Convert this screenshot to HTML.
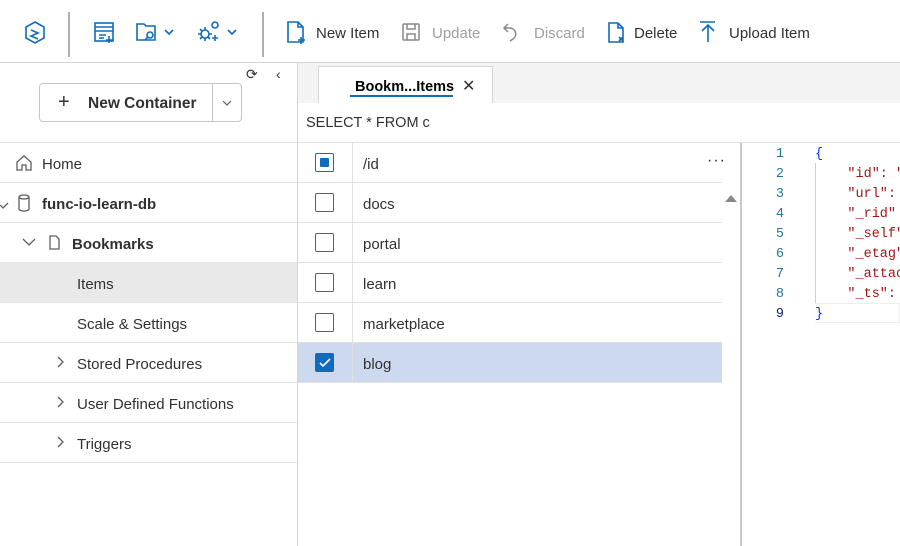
<!DOCTYPE html>
<html><head><style>
*{box-sizing:border-box;margin:0;padding:0}
body{width:900px;height:546px;overflow:hidden;background:#fff;font-family:"Liberation Sans",sans-serif;font-size:15px;color:#323130;position:relative}
.a{position:absolute}
.hl{position:absolute;height:1px;background:#e1e1e1}
.t{position:absolute;white-space:nowrap}
.cb{position:absolute;left:315px;width:19px;height:19px;border:1px solid #605e5c;border-radius:2px;background:#fff}
.mono{font-family:"Liberation Mono",monospace;font-size:13.5px}
</style></head><body>
<svg class="a" style="left:0;top:0" width="900" height="62">
<g fill="none" stroke="#0f6cbd" stroke-width="1.6">
<path d="M35 22 L44 27 L44 38 L35 43 L26 38 L26 27Z"/><path d="M31 30 L38 33 L31 36 L38 39"/>
<rect x="95" y="23" width="18" height="18"/><path d="M95 27h18M95 31h18M99 35h7M99 38h5M109 36v7M106 40h7"/>
<path d="M137 24h7l2 2h9v14h-18z"/><circle cx="150" cy="35" r="3"/><path d="M148 37l-3 3M165 30l4 4 4-4"/>
<circle cx="205" cy="34" r="4"/><path d="M205 27v3M205 38v3M198 34h3M209 34h3M200 29l2 2M208 37l2 2M200 39l2-2"/><circle cx="215" cy="25" r="3"/><path d="M215 35v6M212 38h6M228 30l4 4 4-4"/>
<path d="M288 22h10l5 5v15h-15z"/><path d="M298 22v5h5M301 37v7M298 40h7"/>
<path d="M609 23h9l5 5v14h-14z M618 23v5h5"/><path d="M619 37l4 4M623 37l-4 4"/>
<path d="M700 22h15M708 25v17M702 31l6-6 6 6"/>
</g>
<g fill="none" stroke="#8a8886" stroke-width="1.5">
<rect x="403" y="24" width="16" height="16" rx="1"/><path d="M407 24v5h8v-5M407 40v-6h8v6"/>
<path d="M508 24l-4 4 4 4M504 28h6a6 6 0 0 1 3 11l-3 2"/>
</g>
<path d="M69 12v45M263 12v45" stroke="#605e5c" stroke-width="1"/>
<text x="316" y="38" font-family="Liberation Sans" font-size="15" fill="#323130">New Item</text>
<text x="432" y="38" font-family="Liberation Sans" font-size="15" fill="#a19f9d">Update</text>
<text x="534" y="38" font-family="Liberation Sans" font-size="15" fill="#a19f9d">Discard</text>
<text x="634" y="38" font-family="Liberation Sans" font-size="15" fill="#323130">Delete</text>
<text x="729" y="38" font-family="Liberation Sans" font-size="15" fill="#323130">Upload Item</text>
</svg>
<div class="hl" style="left:0;top:62px;width:900px;background:#d6d6d6"></div>
<div class="a" style="left:297px;top:62px;width:1px;height:484px;background:#d6d6d6"></div>
<div class="t" style="left:246px;top:66px;font-size:14px">⟳</div>
<div class="t" style="left:276px;top:66px;font-size:14px">‹</div>
<div class="a" style="left:39px;top:83px;width:203px;height:39px;border:1px solid #c8c6c4;border-radius:4px"></div>
<div class="a" style="left:212px;top:84px;width:1px;height:37px;background:#c8c6c4"></div>
<div class="t" style="left:58px;top:91px;font-size:20px;font-weight:300">+</div>
<div class="t" style="left:88px;top:95px;font-size:15.5px;font-weight:bold;color:#323130">New Container</div>
<svg class="a" style="left:220px;top:98px" width="14" height="10"><path d="M3 3l4 4 4-4" fill="none" stroke="#605e5c" stroke-width="1.2"/></svg>
<div class="hl" style="left:0;top:142px;width:297px"></div>
<div class="a" style="left:0;top:262px;width:297px;height:40px;background:#e9e9e9"></div>
<div class="hl" style="left:0;top:182px;width:297px"></div><div class="hl" style="left:0;top:222px;width:297px"></div><div class="hl" style="left:0;top:262px;width:297px"></div><div class="hl" style="left:0;top:302px;width:297px"></div><div class="hl" style="left:0;top:342px;width:297px"></div><div class="hl" style="left:0;top:382px;width:297px"></div><div class="hl" style="left:0;top:422px;width:297px"></div><div class="hl" style="left:0;top:462px;width:297px"></div>
<svg class="a" style="left:0;top:142px" width="297" height="320" fill="none" stroke="#605e5c" stroke-width="1.3">
<path d="M17 28v-8l7-6 7 6v8h-5v-5h-4v5z"/>
<path d="M0 63l3 3 5-5"/><ellipse cx="24" cy="55" rx="5" ry="2"/><path d="M19 55v12a5 2 0 0 0 10 0v-12"/>
<path d="M23 97l6 6 6-6"/><path d="M50 94h6l3 3v10h-9z"/>
<path d="M58 215l5 5-5 5M58 255l5 5-5 5M58 295l5 5-5 5"/>
</svg>
<div class="t" style="left:42px;top:156px">Home</div>
<div class="t" style="left:42px;top:196px;font-weight:bold">func-io-learn-db</div>
<div class="t" style="left:72px;top:236px;font-weight:bold">Bookmarks</div>
<div class="t" style="left:77px;top:276px">Items</div>
<div class="t" style="left:77px;top:316px">Scale &amp; Settings</div>
<div class="t" style="left:77px;top:356px">Stored Procedures</div>
<div class="t" style="left:77px;top:396px">User Defined Functions</div>
<div class="t" style="left:77px;top:436px">Triggers</div>
<div class="a" style="left:298px;top:63px;width:602px;height:40px;background:#f3f3f3"></div>
<div class="a" style="left:318px;top:66px;width:175px;height:37px;background:#fff;border:1px solid #d6d6d6;border-bottom:none"></div>
<div class="t" style="left:355px;top:79px;font-weight:bold;font-size:14.5px;color:#000">Bookm...Items</div>
<div class="a" style="left:350px;top:95px;width:103px;height:2px;background:#0f6cbd"></div>
<div class="t" style="left:462px;top:76px;font-size:16px">✕</div>
<div class="t" style="left:306px;top:115px;font-size:14.5px">SELECT * FROM c</div>
<div class="hl" style="left:298px;top:142px;width:602px"></div>
<div class="a" style="left:298px;top:342px;width:424px;height:40px;background:#cdd9ee"></div>
<div class="hl" style="left:298px;top:182px;width:424px"></div><div class="hl" style="left:298px;top:222px;width:424px"></div><div class="hl" style="left:298px;top:262px;width:424px"></div><div class="hl" style="left:298px;top:302px;width:424px"></div><div class="hl" style="left:298px;top:342px;width:424px"></div><div class="hl" style="left:298px;top:382px;width:424px"></div>
<div class="a" style="left:352px;top:142px;width:1px;height:240px;background:#e1e1e1"></div>
<div class="cb" style="top:153px;border-color:#0f6cbd"><div class="a" style="left:4px;top:4px;width:9px;height:9px;background:#0f6cbd;border-radius:1px"></div></div>
<div class="cb" style="top:193px"></div><div class="cb" style="top:233px"></div><div class="cb" style="top:273px"></div><div class="cb" style="top:313px"></div>
<div class="cb" style="top:353px;background:#0f6cbd;border-color:#0f6cbd"><svg class="a" style="left:2px;top:2px" width="14" height="14"><path d="M2 7l3 3 7-7" fill="none" stroke="#fff" stroke-width="1.6"/></svg></div>
<div class="t" style="left:363px;top:156px">/id</div>
<div class="t" style="left:707px;top:152px;font-size:16px;letter-spacing:1px">···</div>
<div class="t" style="left:363px;top:196px">docs</div>
<div class="t" style="left:363px;top:236px">portal</div>
<div class="t" style="left:363px;top:276px">learn</div>
<div class="t" style="left:363px;top:316px">marketplace</div>
<div class="t" style="left:363px;top:356px">blog</div>
<svg class="a" style="left:724px;top:193px" width="14" height="10"><path d="M1 9l6-7 6 7z" fill="#8a8886"/></svg>
<div class="a" style="left:740px;top:143px;width:2px;height:403px;background:#c8c8c8"></div>
<div class="a" style="left:815px;top:163px;width:1px;height:140px;background:#d0d0d0"></div>
<div class="a" style="left:815px;top:303px;width:85px;height:20px;border:1px solid #eee;border-left:none"></div>
<div class="a mono" style="left:740px;top:145px;width:44px;text-align:right;line-height:20px;color:#237893">1<br>2<br>3<br>4<br>5<br>6<br>7<br>8<br><span style="color:#0b216f">9</span></div>
<div class="a mono" style="left:815px;top:145px;line-height:20px;color:#a31515;white-space:pre"><span style="color:#0431fa">{</span>
    "id": "
    "url":
    "_rid"
    "_self"
    "_etag"
    "_attac
    "_ts":
<span style="color:#0431fa">}</span></div>
</body></html>
